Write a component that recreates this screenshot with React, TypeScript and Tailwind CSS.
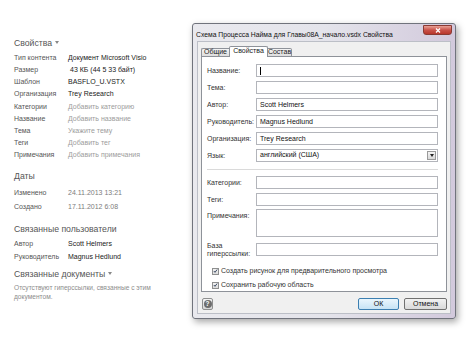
import React from 'react';

const sans = "font-['Liberation_Sans',Arial,sans-serif]";

const props: [string, string, boolean][] = [
  ['Тип контента', 'Документ Microsoft Visio', true],
  ['Размер', '43 КБ (44 5 33 байт)', true],
  ['Шаблон', 'BASFLO_U.VSTX', true],
  ['Организация', 'Trey Research', true],
  ['Категории', 'Добавить категорию', false],
  ['Название', 'Добавить название', false],
  ['Тема', 'Укажите тему', false],
  ['Теги', 'Добавить тег', false],
  ['Примечания', 'Добавить примечания', false],
];

const Caret = () => (
  <svg width="4" height="3" viewBox="0 0 4 3" className="ml-[3px] mb-[3px]">
    <path d="M0 0 L4 0 L2 3 Z" fill="#888" />
  </svg>
);

const Heading = ({ children, caret, className = '' }: { children: React.ReactNode; caret?: boolean; className?: string }) => (
  <div className={`flex items-center h-[12px] text-[8.7px] text-[#555] ${className}`}>
    {children}
    {caret && <Caret />}
  </div>
);

function LeftPane() {
  return (
    <div className="w-[192px] shrink-0 pl-[14px] pt-[38px]">
      <Heading caret className="mb-[2px]">Свойства</Heading>
      <div className="grid grid-cols-[54px_1fr] auto-rows-[12.2px] items-center text-[7px]">
        {props.map(([k, v, filled]) => (
          <React.Fragment key={k}>
            <span className="text-[#555]">{k}</span>
            <span className={filled ? 'text-[#222]' + (k === 'Размер' ? ' pl-[2px]' : '') : 'text-[#9c9c9c]'}>{v}</span>
          </React.Fragment>
        ))}
      </div>

      <Heading className="mt-[9px] mb-[4px]">Даты</Heading>
      <div className="grid grid-cols-[54px_1fr] auto-rows-[13.5px] items-center text-[7px]">
        <span className="text-[#555]">Изменено</span>
        <span className="text-[#7c7c7c]">24.11.2013 13:21</span>
        <span className="text-[#555]">Создано</span>
        <span className="text-[#7c7c7c]">17.11.2012 6:08</span>
      </div>

      <Heading className="mt-[10px] mb-[2px]">Связанные пользователи</Heading>
      <div className="grid grid-cols-[54px_1fr] auto-rows-[13px] items-center text-[7px]">
        <span className="text-[#555]">Автор</span>
        <span className="text-[#222]">Scott Helmers</span>
        <span className="text-[#555]">Руководитель</span>
        <span className="text-[#222]">Magnus Hedlund</span>
      </div>

      <Heading caret className="mt-[5px] mb-[2px]">Связанные документы</Heading>
      <p className="w-[152px] text-[6.6px] leading-[9.5px] text-[#8c8c8c]">
        Отсутствуют гиперссылки, связанные с этим документом.
      </p>
    </div>
  );
}

const Input = ({ value, caret, h = 'h-[13px]' }: { value?: string; caret?: boolean; h?: string }) => (
  <div className={`flex-1 ${h} border border-[#b3b5bb] bg-white flex items-start pl-[3px] pt-[2px] text-[7px] leading-[8px] text-[#111]`}>
    {caret && <span className="w-px h-[8px] bg-black" />}
    {value}
  </div>
);

const Row = ({ label, children, className = '', top }: { label: React.ReactNode; children: React.ReactNode; className?: string; top?: boolean }) => (
  <div className={`flex ${top ? 'items-start' : 'items-center'} ${className}`}>
    <div className={`w-[49px] shrink-0 text-[7px] leading-[7.5px] text-[#333] ${top ? 'pt-[3px]' : ''}`}>{label}</div>
    {children}
  </div>
);

const Check = ({ label, className = '' }: { label: string; className?: string }) => (
  <div className={`flex items-center h-[10px] pl-[5px] ${className}`}>
    <span className="w-[7px] h-[7px] border border-[#8e8f8f] bg-gradient-to-b from-[#f2f2f2] to-[#dcdcdc] flex items-center justify-center">
      <svg width="6" height="6" viewBox="0 0 6 6">
        <path d="M1 3 L2.4 4.6 L5 1.2" stroke="#2a3a55" strokeWidth="1.1" fill="none" />
      </svg>
    </span>
    <span className="ml-[2px] text-[7px] text-[#333]">{label}</span>
  </div>
);

function Dialog() {
  return (
    <div className={`mt-[23px] w-[264px] h-[296px] border border-[#70737c] rounded-[3px] bg-gradient-to-r from-[#e9e9ee] via-[#e4e4eb] to-[#d2c9dc] px-[4px] pb-[4px] flex flex-col shadow-[2px_3px_7px_rgba(0,0,0,0.35)] ${sans}`}>
      <div className="h-[17px] flex items-start shrink-0">
        <span className="mt-[7px] -ml-[1px] text-[6.8px] leading-[8px] text-[#111] whitespace-nowrap">
          Схема Процесса Найма для Главы08А_начало.vsdx Свойства
        </span>
        <div className="ml-auto mt-[1px] -mr-[1px] w-[29px] h-[10px] rounded-b-[3px] border border-[#8a3a33] bg-gradient-to-b from-[#e8a197] via-[#c9524a] to-[#b8362c] flex items-center justify-center">
          <svg width="6" height="5" viewBox="0 0 6 5">
            <path d="M1 0.5 L5 4.5 M5 0.5 L1 4.5" stroke="white" strokeWidth="1.3" />
          </svg>
        </div>
      </div>

      <div className="flex-1 bg-[#f0f0f0] border border-[#bcbfc7] px-[3px] pt-[4px] flex flex-col">
        <div className="flex items-end h-[11px] -mb-px relative z-10 text-[7px] text-[#222]">
          <div className="w-[28px] h-[9px] border border-[#8e9299] border-r-0 rounded-tl-[2px] bg-gradient-to-b from-[#f4f4f4] to-[#dedede] flex items-center justify-center">Общие</div>
          <div className="w-[39px] h-[11px] border border-[#8e9299] border-b-0 rounded-t-[2px] bg-white flex items-center justify-center pb-[1px]">Свойства</div>
          <div className="w-[24px] h-[9px] border border-[#8e9299] border-l-0 rounded-tr-[2px] bg-gradient-to-b from-[#f4f4f4] to-[#dedede] flex items-center justify-center">Состав</div>
        </div>

        <div className="h-[236px] border border-[#8e9299] bg-white pl-[5px] pr-[8px] pt-[7px] flex flex-col">
          <Row label="Название:"><Input caret /></Row>
          <Row label="Тема:" className="mt-[4px]"><Input /></Row>
          <Row label="Автор:" className="mt-[4px]"><Input value="Scott Helmers" /></Row>
          <Row label="Руководитель:" className="mt-[4px]"><Input value="Magnus Hedlund" /></Row>
          <Row label="Организация:" className="mt-[4px]"><Input value="Trey Research" /></Row>
          <Row label="Язык:" className="mt-[4px]">
            <div className="flex-1 h-[13px] border border-[#b3b5bb] bg-white flex items-center pl-[3px] text-[7px] text-[#111]">
              английский (США)
              <span className="ml-auto mr-px w-[9px] h-[9px] border border-[#9a9a9a] bg-gradient-to-b from-[#f4f4f4] to-[#d8d8d8] flex items-center justify-center">
                <svg width="4" height="3" viewBox="0 0 4 3"><path d="M0 0 L4 0 L2 3 Z" fill="#222" /></svg>
              </span>
            </div>
          </Row>
          <div className="mt-[7px] h-px bg-[#dadada]" />
          <Row label="Категории:" className="mt-[6px]"><Input /></Row>
          <Row label="Теги:" className="mt-[4px]"><Input /></Row>
          <Row label="Примечания:" top className="mt-[3px]"><Input h="h-[28px]" /></Row>
          <Row label={<>База<br />гиперссылки:</>} className="mt-[5px]"><Input /></Row>
          <Check label="Создать рисунок для предварительного просмотра" className="mt-[9px]" />
          <Check label="Сохранить рабочую область" className="mt-[4px]" />
        </div>

        <div className="mt-[6px] flex items-center h-[12px]">
          <div className="ml-px w-[11px] h-[12px] border border-[#8e8f8f] rounded-[2px] bg-gradient-to-b from-[#f4f4f4] to-[#d6d6d6] flex items-center justify-center">
            <span className="w-[8px] h-[8px] rounded-full bg-[#6d6d6d] text-white text-[6.5px] leading-[8px] font-bold flex items-center justify-center">?</span>
          </div>
          <div className="ml-auto w-[41px] h-[12px] border border-[#3c7fb1] rounded-[2px] bg-gradient-to-b from-[#eaf6fd] to-[#c6e3f5] flex items-center justify-center text-[7px] text-[#111]">ОК</div>
          <div className="ml-[5px] w-[43px] h-[12px] border border-[#707070] rounded-[2px] bg-gradient-to-b from-[#f2f2f2] to-[#d9d9d9] flex items-center justify-center text-[7px] text-[#111]">Отмена</div>
        </div>
      </div>
    </div>
  );
}

export default function App() {
  return (
    <div className={`w-[474px] h-[339px] bg-white flex overflow-hidden ${sans}`}>
      <LeftPane />
      <Dialog />
    </div>
  );
}
